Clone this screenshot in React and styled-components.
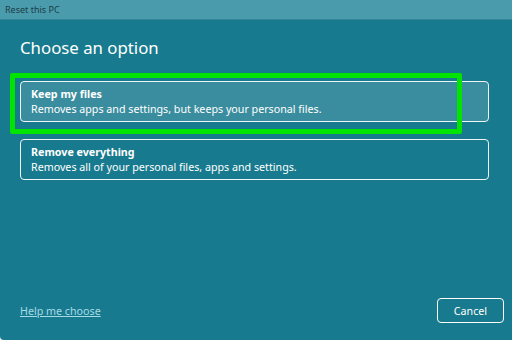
import React from 'react';
import styled, { createGlobalStyle } from 'styled-components';

const GlobalStyle = createGlobalStyle`
  html, body {
    margin: 0;
    padding: 0;
    background: #ffffff;
  }
  body {
    font-family: "Noto Sans", "Open Sans", sans-serif;
  }
`;

const Window = styled.div`
  width: 512px;
  height: 340px;
  background: #187a8e;
  display: flex;
  flex-direction: column;
  border-bottom-left-radius: 4px;
  overflow: hidden;
`;

const TitleBar = styled.div`
  height: 20px;
  flex: none;
  background: #4a9cad;
  color: #1c3d48;
  font-size: 9px;
  display: flex;
  align-items: center;
  padding-left: 5px;
  border-bottom: 1px solid #2f8798;
  box-sizing: border-box;
`;

const Body = styled.div`
  flex: 1;
  display: flex;
  flex-direction: column;
  padding: 16px 23px 17px 20px;
`;

const Heading = styled.h1`
  margin: 0 0 21px;
  font-weight: 400;
  font-size: 16.8px;
  line-height: 24px;
  color: #ffffff;
`;

const Options = styled.div`
  display: flex;
  flex-direction: column;
  gap: 17px;
`;

const Highlight = styled.div`
  position: relative;
`;

const Marker = styled.div`
  position: absolute;
  left: -10px;
  top: -8px;
  width: 452px;
  height: 61px;
  border: 5px solid #00e400;
  border-radius: 2px;
  box-sizing: border-box;
  pointer-events: none;
`;

const Option = styled.button`
  width: 100%;
  height: 41px;
  box-sizing: border-box;
  border: 1.5px solid #eef6f8;
  border-radius: 4px;
  background: ${p => (p.$active ? '#3a8d9e' : 'transparent')};
  color: #ffffff;
  text-align: left;
  padding: 5px 10px;
  font-family: inherit;
  display: flex;
  flex-direction: column;
  justify-content: center;
  cursor: pointer;
`;

const OptionTitle = styled.span`
  font-weight: 700;
  font-size: 10.7px;
  line-height: 15px;
`;

const OptionText = styled.span`
  font-size: 10.7px;
  line-height: 15px;
`;

const Footer = styled.div`
  margin-top: auto;
  display: flex;
  align-items: center;
  justify-content: space-between;
  margin-right: -15px;
`;

const HelpLink = styled.a`
  color: #a6dbe5;
  font-size: 10.7px;
  text-decoration: underline;
  cursor: pointer;
`;

const CancelButton = styled.button`
  width: 67px;
  height: 25px;
  box-sizing: border-box;
  border: 1.5px solid #ffffff;
  border-radius: 4px;
  background: transparent;
  color: #ffffff;
  font-family: inherit;
  font-size: 10.7px;
  cursor: pointer;
`;

export default function App() {
  return (
    <>
      <GlobalStyle />
      <Window>
        <TitleBar>Reset this PC</TitleBar>
        <Body>
          <Heading>Choose an option</Heading>
          <Options>
            <Highlight>
              <Option $active>
                <OptionTitle>Keep my files</OptionTitle>
                <OptionText>Removes apps and settings, but keeps your personal files.</OptionText>
              </Option>
              <Marker />
            </Highlight>
            <Option>
              <OptionTitle>Remove everything</OptionTitle>
              <OptionText>Removes all of your personal files, apps and settings.</OptionText>
            </Option>
          </Options>
          <Footer>
            <HelpLink>Help me choose</HelpLink>
            <CancelButton>Cancel</CancelButton>
          </Footer>
        </Body>
      </Window>
    </>
  );
}
